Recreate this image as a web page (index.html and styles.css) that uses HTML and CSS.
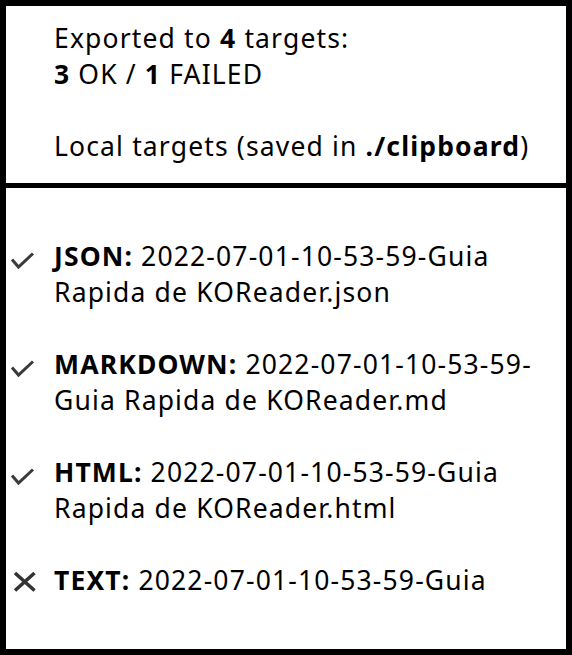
FILE: index.html
```html
<!DOCTYPE html>
<html lang="en">
<head>
<meta charset="utf-8">
<title>Export summary</title>
<link rel="stylesheet" href="styles.css">
</head>
<body>
<div class="dialog">
  <div class="summary">
    <p class="line">Exported to <b>4</b> targets:</p>
    <p class="line"><b>3</b> OK / <b>1</b> FAILED</p>
    <p class="line blank">&nbsp;</p>
    <p class="line">Local targets (saved in <b>./clipboard</b>)</p>
  </div>
  <div class="results">
    <div class="viewport">
      <ul class="list">
        <li class="item">
          <span class="icon"><svg width="48" height="36" viewBox="0 0 48 36"><path d="M6 21.5 L12.5 29 L27 15.5" fill="none" stroke="#3a3a3a" stroke-width="3"/></svg></span>
          <span class="text"><b>JSON:</b> 2022-07-01-10-53-59-Guia Rapida de KOReader.json</span>
        </li>
        <li class="item">
          <span class="icon"><svg width="48" height="36" viewBox="0 0 48 36"><path d="M6 21.5 L12.5 29 L27 15.5" fill="none" stroke="#3a3a3a" stroke-width="3"/></svg></span>
          <span class="text"><b>MARKDOWN:</b> 2022-07-01-10-53-59-Guia Rapida de KOReader.md</span>
        </li>
        <li class="item">
          <span class="icon"><svg width="48" height="36" viewBox="0 0 48 36"><path d="M6 21.5 L12.5 29 L27 15.5" fill="none" stroke="#3a3a3a" stroke-width="3"/></svg></span>
          <span class="text"><b>HTML:</b> 2022-07-01-10-53-59-Guia Rapida de KOReader.html</span>
        </li>
        <li class="item">
          <span class="icon"><svg width="48" height="36" viewBox="0 0 48 36"><path d="M9 11 L28.5 28.5 M28.5 11 L9 28.5" fill="none" stroke="#333" stroke-width="3.6"/></svg></span>
          <span class="text"><b>TEXT:</b> 2022-07-01-10-53-59-Guia Rapida de KOReader.txt</span>
        </li>
      </ul>
    </div>
  </div>
</div>
</body>
</html>
```

FILE: styles.css
```css
html, body {
  margin: 0;
  padding: 0;
  background: #fff;
}

.dialog {
  box-sizing: border-box;
  width: 572px;
  height: 655px;
  border: 6px solid #000;
  display: flex;
  flex-direction: column;
  font-family: "Noto Sans", "Open Sans", sans-serif;
  font-size: 26.5px;
  line-height: 36px;
  letter-spacing: 1.15px;
  color: #000;
}

.summary {
  padding: 14px 12px 19px 48px;
  border-bottom: 5px solid #000;
}

.line {
  margin: 0;
  white-space: nowrap;
}

b {
  font-weight: 700;
}

.results {
  flex: 1;
  padding-top: 14px;
}

.viewport {
  height: 396px;
  overflow: hidden;
}

.list {
  list-style: none;
  margin: 0;
  padding: 36px 0 0 0;
}

.item {
  display: flex;
  margin-bottom: 36px;
}

.icon {
  flex: 0 0 48px;
  height: 36px;
}

.icon svg {
  display: block;
}

.text {
  flex: 1;
  padding-right: 8px;
}
```
